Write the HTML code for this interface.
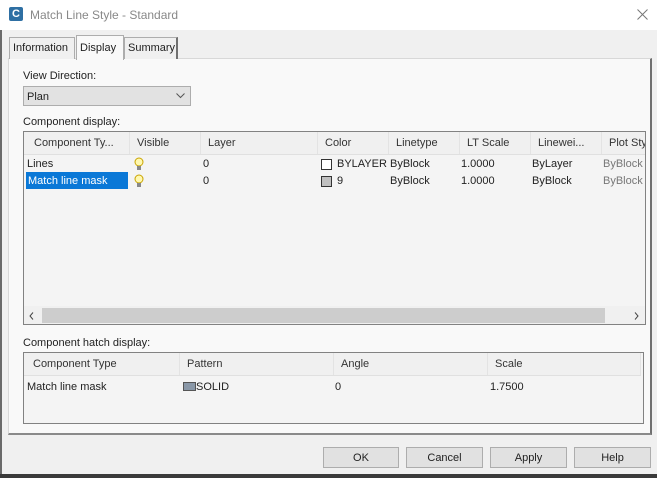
<!DOCTYPE html><html><head><style>
*{box-sizing:border-box;margin:0;padding:0}
body{width:657px;height:478px;background:#f0f0f0;font-family:"Liberation Sans",sans-serif;font-size:11px;color:#222;position:relative;overflow:hidden}
.a{position:absolute}
.title{left:0;top:0;width:657px;height:30px;background:#fff}
.tab{top:37px;height:22px;border:1px solid #adadad;border-bottom:none;background:#f0f0f0;padding:4px 3px 0;font-size:11px}
.panel{left:8px;top:58px;width:644px;height:377px;background:#f9f9f9;border:1px solid #d8d8d8;border-right:2px solid #707070;border-bottom:2px solid #8a8a8a}
.list{background:#f4f4f4;border:1px solid #828282}
.hd{top:0;height:23px;background:#f0f0f0;border-bottom:1px solid #e0e0e0}
.hc{top:0;height:22px;line-height:23px;padding-left:7px;border-right:1px solid #e3e3e3;color:#333}
.cell{height:17px;line-height:18px}
.btn{top:447px;height:21px;background:#e1e1e1;border:1px solid #adadad;text-align:center;line-height:20px;font-size:11px}
.bulb{width:10px;height:14px}
</style></head><body>
<div class="a title"></div>
<div class="a" style="left:9px;top:7px;width:14px;height:14px;background:#2e6fa3;border-radius:2px;color:#fff;font-weight:bold;font-size:11px;text-align:center;line-height:14px">C</div>
<div class="a" style="left:30px;top:8px;font-size:12px;color:#888">Match Line Style - Standard</div>
<svg class="a" style="left:637px;top:9px" width="11" height="11" viewBox="0 0 11 11"><path d="M0.5 0.5L10.5 10.5M10.5 0.5L0.5 10.5" stroke="#777" stroke-width="1"/></svg>
<div class="a" style="left:0;top:30px;width:2px;height:448px;background:#6a6a6a"></div>
<div class="a" style="left:0;top:474px;width:657px;height:4px;background:#3a3a3a"></div>
<div class="a panel"></div>
<div class="a tab" style="left:9px;width:66px">Information</div>
<div class="a tab" style="left:76px;top:35px;height:25px;width:48px;background:#f9f9f9;z-index:2;padding-top:6px">Display</div>
<div class="a tab" style="left:124px;width:54px;border-right:2px solid #707070">Summary</div>
<div class="a" style="left:23px;top:70px">View Direction:</div>
<div class="a" style="left:23px;top:86px;width:168px;height:20px;background:#e2e2e2;border:1px solid #adadad;padding:4px 0 0 3px">Plan<svg class="a" style="right:5px;top:6px" width="9" height="6" viewBox="0 0 9 6"><path d="M0.5 0.5L4.5 4.5L8.5 0.5" fill="none" stroke="#555"/></svg></div>
<div class="a" style="left:23px;top:116px">Component display:</div>
<div class="a list" style="left:23px;top:131px;width:623px;height:194px">
 <div class="a hd" style="left:0;width:621px"></div>
 <div class="a hc" style="left:0;width:106px;padding-left:10px">Component Ty...</div>
 <div class="a hc" style="left:106px;width:71px">Visible</div>
 <div class="a hc" style="left:177px;width:117px">Layer</div>
 <div class="a hc" style="left:294px;width:71px">Color</div>
 <div class="a hc" style="left:365px;width:71px">Linetype</div>
 <div class="a hc" style="left:436px;width:71px">LT Scale</div>
 <div class="a hc" style="left:507px;width:71px">Linewei...</div>
 <div class="a hc" style="left:578px;width:43px;overflow:hidden;white-space:nowrap;border:none">Plot Style</div>
 <div class="a cell" style="left:3px;top:23px">Lines</div>
 <div class="a cell" style="left:2px;top:40px;width:102px;background:#0a78d7;color:#fff;padding-left:2px">Match line mask</div>
 <svg class="a bulb" style="left:110px;top:25px" viewBox="0 0 10 14"><circle cx="5" cy="5" r="4" fill="#fff8b0" stroke="#c9a400"/><rect x="3" y="9" width="4" height="4" fill="#888"/></svg>
 <svg class="a bulb" style="left:110px;top:42px" viewBox="0 0 10 14"><circle cx="5" cy="5" r="4" fill="#fff8b0" stroke="#c9a400"/><rect x="3" y="9" width="4" height="4" fill="#888"/></svg>
 <div class="a cell" style="left:179px;top:23px">0</div><div class="a cell" style="left:179px;top:40px">0</div>
 <div class="a" style="left:297px;top:27px;width:11px;height:11px;background:#fff;border:1px solid #333"></div>
 <div class="a" style="left:297px;top:44px;width:11px;height:11px;background:#c0c0c0;border:1px solid #333"></div>
 <div class="a cell" style="left:313px;top:23px">BYLAYER</div><div class="a cell" style="left:313px;top:40px">9</div>
 <div class="a cell" style="left:366px;top:23px">ByBlock</div><div class="a cell" style="left:366px;top:40px">ByBlock</div>
 <div class="a cell" style="left:437px;top:23px">1.0000</div><div class="a cell" style="left:437px;top:40px">1.0000</div>
 <div class="a cell" style="left:508px;top:23px">ByLayer</div><div class="a cell" style="left:508px;top:40px">ByBlock</div>
 <div class="a cell" style="left:579px;top:23px;color:#777">ByBlock</div><div class="a cell" style="left:579px;top:40px;color:#777">ByBlock</div>
 <div class="a" style="left:0;top:174px;width:621px;height:18px;background:#f0f0f0"></div>
 <div class="a" style="left:18px;top:176px;width:563px;height:15px;background:#cdcdcd"></div>
 <svg class="a" style="left:5px;top:180px" width="5" height="8" viewBox="0 0 5 8"><path d="M4 0.5L1 4L4 7.5" fill="none" stroke="#444"/></svg>
 <svg class="a" style="left:610px;top:180px" width="5" height="8" viewBox="0 0 5 8"><path d="M1 0.5L4 4L1 7.5" fill="none" stroke="#444"/></svg>
</div>
<div class="a" style="left:23px;top:337px">Component hatch display:</div>
<div class="a list" style="left:23px;top:352px;width:621px;height:72px">
 <div class="a hd" style="left:0;width:617px"></div>
 <div class="a hc" style="left:0;width:156px;padding-left:9px">Component Type</div>
 <div class="a hc" style="left:156px;width:154px">Pattern</div>
 <div class="a hc" style="left:310px;width:154px">Angle</div>
 <div class="a hc" style="left:464px;width:153px">Scale</div>
 <div class="a cell" style="left:3px;top:25px">Match line mask</div>
 <div class="a" style="left:159px;top:29px;width:13px;height:9px;background:#8a98a8;border:1px solid #555"></div>
 <div class="a cell" style="left:172px;top:25px">SOLID</div>
 <div class="a cell" style="left:311px;top:25px">0</div>
 <div class="a cell" style="left:466px;top:25px">1.7500</div>
</div>
<div class="a btn" style="left:323px;width:76px">OK</div>
<div class="a btn" style="left:406px;width:77px">Cancel</div>
<div class="a btn" style="left:490px;width:77px">Apply</div>
<div class="a btn" style="left:574px;width:77px">Help</div>
</body></html>
